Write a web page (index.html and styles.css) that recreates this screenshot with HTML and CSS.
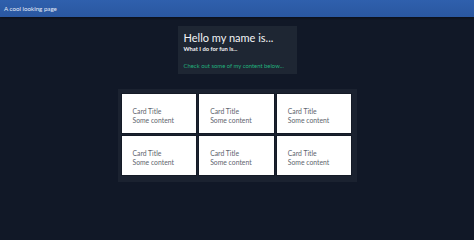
FILE: index.html
```html
<!DOCTYPE html>
<html>
<head>
<meta charset="utf-8">
<link rel="stylesheet" href="styles.css">
</head>
<body>
<header class="topbar">A cool looking page</header>
<main class="main">
  <section class="hero">
    <h1 class="hero-title">Hello my name is...</h1>
    <p class="hero-sub">What I do for fun is...</p>
    <p class="hero-link">Check out some of my content below...</p>
  </section>
  <section class="grid">
    <div class="card"><div class="card-title">Card Title</div><div class="card-body">Some content</div></div>
    <div class="card"><div class="card-title">Card Title</div><div class="card-body">Some content</div></div>
    <div class="card"><div class="card-title">Card Title</div><div class="card-body">Some content</div></div>
    <div class="card"><div class="card-title">Card Title</div><div class="card-body">Some content</div></div>
    <div class="card"><div class="card-title">Card Title</div><div class="card-body">Some content</div></div>
    <div class="card"><div class="card-title">Card Title</div><div class="card-body">Some content</div></div>
  </section>
</main>
</body>
</html>
```
FILE: styles.css
```css
html, body {
  margin: 0;
  padding: 0;
  height: 100%;
}
body {
  background: #111827;
  font-family: Lato, "Noto Sans", sans-serif;
}
.topbar {
  height: 17px;
  box-sizing: border-box;
  background: linear-gradient(#2f60ad, #2a57a0);
  color: #e6ecf7;
  font-size: 6.2px;
  line-height: 17px;
  padding-left: 4px;
  box-shadow: 0 1px 2px rgba(0,0,0,0.4);
}
.main {
  display: flex;
  flex-direction: column;
  align-items: center;
  padding-top: 9px;
}
.hero {
  width: 119px;
  height: 48px;
  box-sizing: border-box;
  background: #1e2633;
  padding: 5px 6px 0;
}
.hero-title {
  margin: 0;
  color: #f3f4f6;
  font-size: 11px;
  font-weight: 400;
  line-height: 13px;
  white-space: nowrap;
}
.hero-sub {
  margin: 1px 0 0;
  color: #f3f4f6;
  font-size: 5.8px;
  font-weight: 700;
  line-height: 7px;
  white-space: nowrap;
}
.hero-link {
  margin: 10px 0 0;
  color: #22b07d;
  font-size: 5.9px;
  line-height: 7px;
  white-space: nowrap;
}
.grid {
  margin-top: 15px;
  width: 239px;
  box-sizing: border-box;
  background: #1b2230;
  padding: 4px 4px 6px 3px;
  display: grid;
  grid-template-columns: repeat(3, 1fr);
  gap: 1px;
}
.card {
  background: #ffffff;
  border: 1px solid #141a26;
  height: 41px;
  box-sizing: border-box;
  padding: 13px 11px 0;
  color: #60656e;
  font-size: 6.8px;
  line-height: 8.5px;
}
```
